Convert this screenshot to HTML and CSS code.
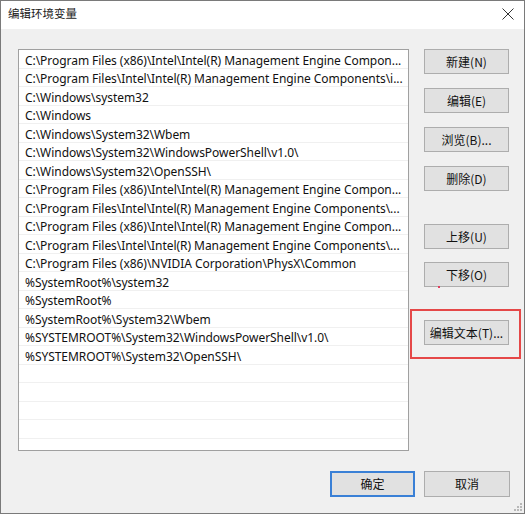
FILE: index.html
```html
<!DOCTYPE html>
<html lang="zh-CN">
<head>
<meta charset="utf-8">
<title>编辑环境变量</title>
<link rel="stylesheet" href="styles.css">
</head>
<body>
<div class="window">
  <div class="titlebar">
    <span class="title">编辑环境变量</span>
    <svg class="close" width="12" height="12" viewBox="0 0 12 12"><path d="M0.5 0.5 L11.5 11.5 M11.5 0.5 L0.5 11.5" stroke="#333" stroke-width="1" fill="none"/></svg>
  </div>
  <div class="content">
    <div class="main">
      <div class="list">
        <div class="row">C:\Program Files (x86)\Intel\Intel(R) Management Engine Compon...</div>
        <div class="row">C:\Program Files\Intel\Intel(R) Management Engine Components\i...</div>
        <div class="row">C:\Windows\system32</div>
        <div class="row">C:\Windows</div>
        <div class="row">C:\Windows\System32\Wbem</div>
        <div class="row">C:\Windows\System32\WindowsPowerShell\v1.0\</div>
        <div class="row">C:\Windows\System32\OpenSSH\</div>
        <div class="row">C:\Program Files (x86)\Intel\Intel(R) Management Engine Compon...</div>
        <div class="row">C:\Program Files\Intel\Intel(R) Management Engine Components\...</div>
        <div class="row">C:\Program Files (x86)\Intel\Intel(R) Management Engine Compon...</div>
        <div class="row">C:\Program Files\Intel\Intel(R) Management Engine Components\...</div>
        <div class="row">C:\Program Files (x86)\NVIDIA Corporation\PhysX\Common</div>
        <div class="row">%SystemRoot%\system32</div>
        <div class="row">%SystemRoot%</div>
        <div class="row">%SystemRoot%\System32\Wbem</div>
        <div class="row">%SYSTEMROOT%\System32\WindowsPowerShell\v1.0\</div>
        <div class="row">%SYSTEMROOT%\System32\OpenSSH\</div>
        <div class="row"></div>
        <div class="row"></div>
        <div class="row"></div>
        <div class="row"></div>
        <div class="row"></div>
        <div class="row"></div>
      </div>
      <div class="side">
        <button class="btn">新建(N)</button>
        <button class="btn">编辑(E)</button>
        <button class="btn">浏览(B)...</button>
        <button class="btn">删除(D)</button>
        <button class="btn group">上移(U)</button>
        <button class="btn">下移(O)</button>
        <button class="btn group">编辑文本(T)...</button>
      </div>
    </div>
    <div class="footer">
      <button class="btn default">确定</button>
      <button class="btn cancel">取消</button>
    </div>
  </div>
  <div class="highlight"></div>
  <div class="dot"></div>
  <svg class="grip" width="10" height="10" viewBox="0 0 10 10">
    <rect x="7" y="1" width="2" height="2" fill="#b8b8b8"/>
    <rect x="4" y="4" width="2" height="2" fill="#b8b8b8"/>
    <rect x="7" y="4" width="2" height="2" fill="#b8b8b8"/>
    <rect x="1" y="7" width="2" height="2" fill="#b8b8b8"/>
    <rect x="4" y="7" width="2" height="2" fill="#b8b8b8"/>
    <rect x="7" y="7" width="2" height="2" fill="#b8b8b8"/>
  </svg>
</div>
</body>
</html>
```
FILE: styles.css
```css
* { box-sizing: border-box; }
html, body { margin: 0; padding: 0; background: #f0f0f0; }
body {
  font-family: "Noto Sans", "Noto Sans CJK SC", sans-serif;
  color: #000;
}
.window {
  position: relative;
  width: 525px;
  height: 514px;
  border: 1px solid #7a7a7a;
  background: #f0f0f0;
  overflow: hidden;
}
.titlebar {
  height: 28px;
  background: #fff;
  display: flex;
  align-items: center;
  justify-content: space-between;
  padding: 0 10px 0 7px;
}
.title {
  font-family: "Noto Sans CJK SC", sans-serif;
  font-size: 11.5px;
  color: #1a1a1a;
  line-height: 1;
  margin-top: -2px;
}
.close { margin-top: -3px; }
.content {
  padding: 20px 14px 0 17px;
}
.main {
  display: flex;
  gap: 15px;
}
.list {
  width: 391px;
  height: 402px;
  background: #fff;
  border: 1px solid #a0a0a0;
  overflow: hidden;
}
.row {
  height: 18.5px;
  line-height: 16px;
  padding-top: 2.5px;
  padding-left: 6px;
  font-size: 12px;
  letter-spacing: -0.05px;
  color: #111;
  white-space: nowrap;
  overflow: hidden;
  border-bottom: 1px solid #f0f0f0;
}
.side {
  display: flex;
  flex-direction: column;
  gap: 14px;
}
.btn {
  width: 85px;
  height: 25px;
  margin: 0;
  padding: 0;
  background: #e1e1e1;
  border: 1px solid #adadad;
  font-family: "Noto Sans CJK SC", "Noto Sans", sans-serif;
  font-size: 12px;
  color: #111;
  line-height: 1;
}
.btn.group { margin-top: 19px; }
.side .btn:nth-child(6) { margin-top: -1px; }
.footer {
  display: flex;
  justify-content: flex-end;
  gap: 9px;
  margin-top: 20px;
}
.footer .btn { height: 26px; }
.btn.cancel { width: 86px; }
.btn.default {
  border: 2px solid #3a80d6;
}
.highlight {
  position: absolute;
  left: 409px;
  top: 308px;
  width: 111px;
  height: 50px;
  border: 2px solid #e54848;
}
.dot {
  position: absolute;
  left: 437px;
  top: 285px;
  width: 2px;
  height: 2px;
  background: #e0405e;
}
.grip {
  position: absolute;
  right: 1px;
  bottom: 1px;
}
```
